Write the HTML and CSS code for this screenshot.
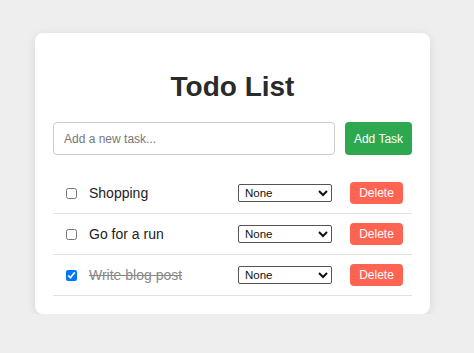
FILE: index.html
```html
<!DOCTYPE html>
<html>
<head>
    <title>Todo List</title>
    <link rel="stylesheet" href="styles.css">
</head>
<body>

<div class="card">
    <h1>Todo List</h1>

    <div class="add-row">
        <input type="text" class="task-input" placeholder="Add a new task...">
        <button class="add-btn">Add Task</button>
    </div>

    <ul class="todo-list">
        <li class="todo-item">
            <input type="checkbox" class="check">
            <span class="task-text">Shopping</span>
            <select class="tag-select"><option>None</option></select>
            <button class="delete-btn">Delete</button>
        </li>
        <li class="todo-item">
            <input type="checkbox" class="check">
            <span class="task-text">Go for a run</span>
            <select class="tag-select"><option>None</option></select>
            <button class="delete-btn">Delete</button>
        </li>
        <li class="todo-item done">
            <input type="checkbox" class="check" checked>
            <span class="task-text">Write blog post</span>
            <select class="tag-select"><option>None</option></select>
            <button class="delete-btn">Delete</button>
        </li>
    </ul>
</div>

</body>
</html>
```
FILE: styles.css
```css
body {
    font-family: "Liberation Sans", Arial, sans-serif;
    margin: 0;
    padding: 0;
    background-color: #eeeeee;
}

.card {
    background-color: #fff;
    box-shadow: 0 2px 10px rgba(0, 0, 0, 0.1);
    border-radius: 8px;
    width: 359px;
    padding: 18px;
    margin: 33px 0 0 35px;
}

h1 {
    font-size: 28px;
    text-align: center;
    color: #2a2a2a;
    margin: 20px 0;
    line-height: 31px;
}

.add-row {
    display: flex;
    gap: 10px;
    margin-bottom: 18px;
}

.task-input {
    flex: 1;
    height: 33px;
    box-sizing: border-box;
    padding: 0 10px;
    border: 1px solid #cccccc;
    border-radius: 4px;
    font-family: inherit;
    font-size: 12px;
}

.task-input::placeholder {
    color: #777;
}

.add-btn {
    width: 67px;
    height: 33px;
    background-color: #2ea84f;
    color: white;
    border: none;
    border-radius: 4px;
    font-family: inherit;
    font-size: 12px;
    padding: 0;
}

.todo-list {
    list-style: none;
    margin: 0;
    padding: 0;
}

.todo-item {
    display: flex;
    align-items: center;
    padding: 9px 9px 9px 10px;
    border-bottom: 1px solid #e2e2e2;
}

.check {
    width: 11px;
    height: 11px;
    margin: 0 12px 0 3px;
}

.task-text {
    flex: 1;
    font-size: 14px;
    color: #222;
}

.done .task-text {
    text-decoration: line-through;
    color: #888;
}

.tag-select {
    width: 94px;
    height: 18px;
    font-family: inherit;
    font-size: 11.5px;
    padding: 0 2px;
    border: 1px solid #555;
    border-radius: 2px;
    background-color: #fff;
    color: #111;
}

.delete-btn {
    margin-left: 18px;
    width: 53px;
    height: 22px;
    background-color: #ff6452;
    color: white;
    border: none;
    border-radius: 4px;
    font-family: inherit;
    font-size: 12px;
    padding: 0;
}
```
